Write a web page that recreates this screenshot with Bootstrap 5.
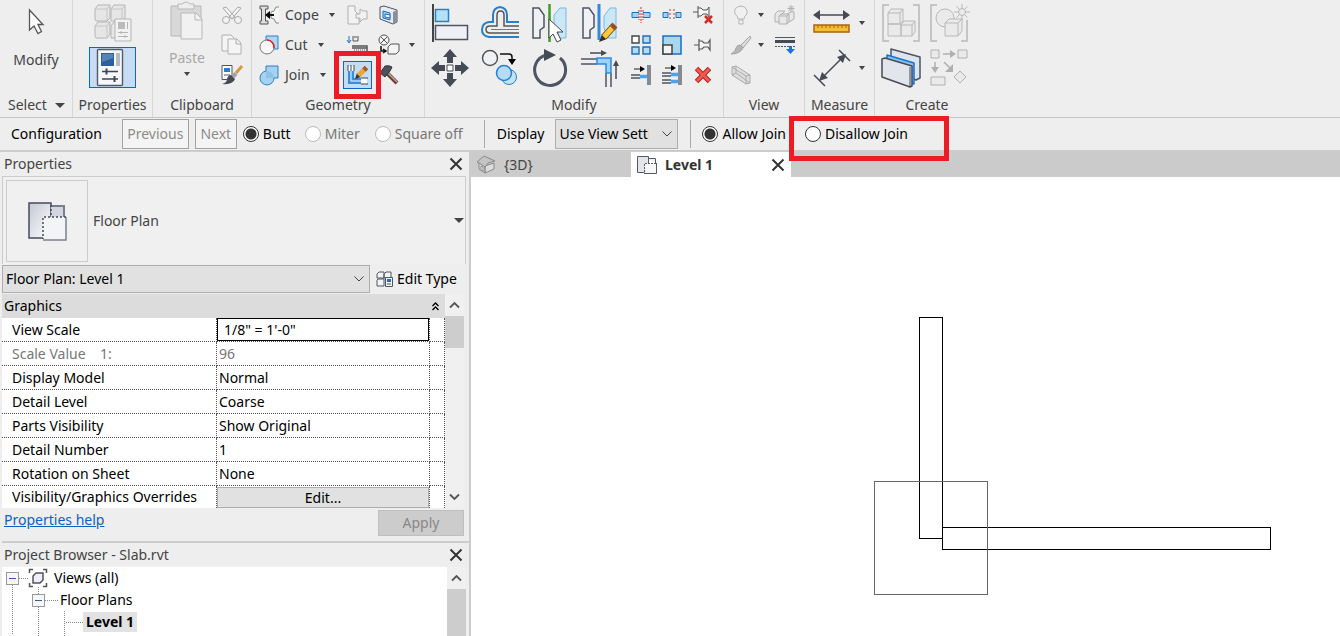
<!DOCTYPE html>
<html lang="en">
<head>
<meta charset="utf-8">
<meta name="viewport" content="width=device-width, initial-scale=1">
<title>Slab.rvt - Floor Plan: Level 1</title>
<link href="https://cdn.jsdelivr.net/npm/bootstrap@5.3.0/dist/css/bootstrap.min.css" rel="stylesheet">
<style>
  body { font-family: "Noto Sans", "Open Sans", sans-serif; font-size: 14px; line-height: 20px; color: #000; background: #eee; }
  button, select, input { font: inherit; color: inherit; }
  svg { display: block; flex: none; overflow: visible; }
  .bare { border: 0; padding: 0; background: none; display: flex; align-items: center; justify-content: center; }

  /* ribbon */
  .ribbon { border-bottom: 1px solid #c6c6c6; color: #444; }
  .pane { border-right: 1px solid #d6d6d6; display: flex; flex-direction: column; }
  .pane:last-child { border-right: 0; }
  .pane-body { height: 93px; }
  .pane-name { line-height: 24px; text-align: center; white-space: nowrap; }
  .w-select { width: 73px; } .w-props { width: 80px; } .w-clip { width: 99px; } .w-geo { width: 173px; }
  .w-modify { width: 299px; } .w-view { width: 81px; } .w-measure { width: 70px; } .w-create { width: 104px; }
  .tools { display: grid; align-items: center; align-content: start; }
  .rows2 { grid-auto-rows: 45px; }
  .rows3 { grid-auto-rows: 30px; }
  .big4 { grid-template-columns: repeat(4, 50px); }
  .small3 { grid-template-columns: repeat(3, 31px); }
  .pair { grid-template-columns: repeat(2, 48px); padding-left: 2px; }
  .geo-cols { grid-template-columns: 82px 32px 32px 12px; padding-left: 7px; }
  .word { margin-left: 6px; margin-right: 10px; }
  .active-tool { background: #c5dcf3; border: 1px solid #0f66c4; }
  .caret { width: 0; height: 0; border: 3px solid transparent; border-top: 4px solid #444; border-bottom: 0; display: inline-block; }
  .caret-lg { border-width: 5px 5px 0; }
  .off { color: #a8a8a8; }
  .callout { position: absolute; border: 5px solid #ed1c24; pointer-events: none; z-index: 3; }
  .callout-tool { inset: -10px -9px; }
  .callout-option { inset: -8px -41px -17px -16px; }

  /* options bar */
  .options { height: 34px; border-bottom: 2px solid #ccc; white-space: nowrap; }
  .cfg { margin: 0 20px 0 11px; }
  .step { border: 1px solid #a3a3a3; background: #f4f4f4; color: #8c8c8c; height: 30px; padding: 0; }
  .step-prev { width: 67px; margin-right: 6px; }
  .step-next { width: 42px; }
  .opt-butt { margin: 0 14px 0 6px; }
  .opt-miter { margin-right: 15px; }
  .opt-square { margin-right: 21px; }
  .opt-display { margin: 0 11px 0 12px; }
  .opt-allow { margin: 0 19px 0 11px; }
  .rad { appearance: none; width: 16px; height: 16px; margin: 0 4px 0 0; border: 1px solid #333; border-radius: 50%; background: #fff; flex: none; }
  .rad:checked { background: radial-gradient(circle, #333 5px, #fff 6px); }
  .rad:disabled { border-color: #bbb; }
  .gray { color: #777; }
  .rule { width: 1px; height: 28px; background: #aaa; }
  .rule-join { margin-left: 12px; }
  .combo { appearance: none; border: 1px solid #adadad; border-radius: 0; background: #e1e1e1 url("data:image/svg+xml,%3Csvg xmlns='http://www.w3.org/2000/svg' width='10' height='6'%3E%3Cpath d='M.5 .5L5 5L9.500 .5' fill='none' stroke='%23444'/%3E%3C/svg%3E") no-repeat right 5px center; }
  .combo-display { width: 123px; height: 30px; padding: 0 28px 0 3px; }

  /* side panels */
  .side { flex: 0 0 471px; border-right: 2px solid #ccc; padding-left: 2px; }
  .panel-title { height: 24px; padding: 0 6px 0 2px; color: #444; }
  .typebox { border: 1px solid #ccc; border-bottom: 0; height: 88px; margin-right: 3px; padding: 3px 1px 3px 3px; color: #444; background: #f0f0f0; }
  .thumb-box { width: 82px; height: 82px; border: 1px solid #ccc; margin-right: 5px; }
  .edit-row { height: 30px; }
  .type-btn { margin-left: 6px; }
  .combo-type { width: 368px; height: 28px; padding: 0 24px 0 3px; }
  .props { width: 443px; table-layout: fixed; border-collapse: separate; border-spacing: 0; background: #fff; }
  .props th, .props td { height: 24px; padding: 0 2px; line-height: 20px; font-weight: 400; border-bottom: 1px dotted #555; border-right: 1px dotted #555; white-space: nowrap; }
  .props tbody th { padding-left: 10px; }
  .props thead th { background: #dcdcdc; border: 0; }
  .props tbody tr:last-child td, .props tbody tr:last-child th { border-bottom: 0; height: 22px; }
  .props td.flush { padding: 0; }
  .c-name { width: 215px; }
  .c-value { width: 213px; }
  .gray-row th, .gray-row td { color: #777; }
  .scale { width: 100%; height: 23px; display: block; border: 1px solid #000; border-radius: 0; padding: 0 6px; }
  .edit { width: 100%; height: 21px; line-height: 18px; border: 1px solid #adadad; background: #e1e1e1; display: block; }
  .scroll { width: 19px; background: #f0f0f0; }
  .knob { background: #cdcdcd; }
  .knob-a { height: 32px; }
  .foot { height: 35px; padding: 2px 5px 0 2px; }
  .apply { width: 86px; height: 26px; border: 1px solid #bfbfbf; background: #ccc; color: #888; }
  .help { color: #0a62c4; }
  .split { border-bottom: 2px solid #ccc; }
  .tree { margin-right: 3px; }
  .leaf { height: 22px; white-space: nowrap; }
  .picked { background: #e2e2e2; padding: 0 3px; font-weight: 700; color: #000; }

  /* view tabs */
  .tabs { height: 25px; background: #cbcbcb; color: #444; }
  .doc { width: 160px; padding: 0 6px; }
  .doc-on { background: #fff; font-weight: 700; color: #333; }
</style>
</head>
<body class="d-flex flex-column vh-100 overflow-hidden">

<header class="ribbon d-flex">
  <section class="pane w-select">
    <button class="bare pane-body flex-column justify-content-start pt-2">
      <svg width="20" height="30" viewBox="0 0 20 30"><path d="M3.500 2v20l4.500-4 4 7.500 3.500-2-3.500-7h5z" fill="#fff" stroke="#555" stroke-width="1.300"/></svg>
      <span class="mt-2 pt-1">Modify</span>
    </button>
    <div class="pane-name d-flex align-items-center ps-2">Select<i class="caret caret-lg ms-2"></i></div>
  </section>

  <section class="pane w-props">
    <div class="pane-body tools rows2 justify-content-center">
      <button class="bare" aria-label="Type Properties">
        <svg width="38" height="38" viewBox="0 0 38 38" fill="#e6e6e6" stroke="#b5b5b5" stroke-linejoin="round"><path d="M1 5l3-4h12v13l-3 3H2q-1-1-1-3zM17 5l3-4h11v13l-2 3H17zM1 22l3-4h12v12l-3 4H2q-1-1-1-3z"/><path d="M17 22l3-4h5v16h-8z"/><path d="M2 5h11v11M18 5h10v11M2 22h11v11M13 5l3-4M28 5l3-4M13 22l3-4" fill="none" stroke="#c6c6c6"/><rect x="21" y="15" width="16" height="22" fill="#f2f2f2"/><rect x="24" y="18" width="7" height="7" fill="#bbb" stroke="none"/><path d="M33.500 18v7M24 28.500h10M24 32.500h10M27 27v3M31 31v3"/></svg>
      </button>
      <button class="bare active-tool" aria-label="Properties">
        <svg width="45" height="39" viewBox="0 0 45 39"><rect x="7.500" y="1.500" width="25" height="36" rx="1" fill="#f6f7f9" stroke="#555b66" stroke-width="1.400"/><path d="M11 5h13v13H11z" fill="#2d6098"/><path d="M12 6h11v4L12 14z" fill="#5585b5"/><path d="M26 5h4v13h-4z" fill="#b4b9c4"/><path d="M12 23.500h16M12 31h16" stroke="#3f4855" stroke-width="1.500"/><path d="M16.500 20.500v6M24.500 28v6" stroke="#3f4855" stroke-width="2"/></svg>
      </button>
    </div>
    <div class="pane-name">Properties</div>
  </section>

  <section class="pane w-clip">
    <div class="pane-body d-flex">
      <button class="bare off flex-column justify-content-start ms-3">
        <svg width="34" height="44" viewBox="0 0 34 44" stroke="#b8b8b8" fill="#d8d8d8"><path d="M1 6h30v30H1z"/><path d="M8 9V4h4q4-4 8 0h4v5z" fill="#eee"/><path d="M11 13h15l6 6v20H11z" fill="#f1f1f1"/><path d="M25 13v7h7" fill="none"/></svg>
        <span class="mt-1">Paste</span><i class="caret mt-1"></i>
      </button>
      <div class="tools rows3 ms-auto me-2">
        <button class="bare" aria-label="Cut to Clipboard"><svg width="22" height="22" viewBox="0 0 22 22" fill="#f2f2f2" stroke="#aaa"><path d="M2 4l3-1 9 10-3 2zM20 4l-3-1-9 10 3 2z"/><circle cx="5" cy="16" r="3.500"/><circle cx="17" cy="16" r="3.500"/></svg></button>
        <button class="bare" aria-label="Copy to Clipboard"><svg width="22" height="22" viewBox="0 0 22 22" fill="#f4f4f4" stroke="#b0b0b0"><path d="M1 1h9l3 3v13H1z"/><path d="M7 5h9l4 4v11H7zM15 5v5h5"/></svg></button>
        <button class="bare" aria-label="Match Type"><svg width="22" height="22" viewBox="0 0 22 22"><path d="M1 1.500h10v14H1z" fill="#fff" stroke="#4c5563"/><path d="M3 4h6v4H3z" fill="#2b7cd3"/><path d="M3 11h6" stroke="#4c5563"/><path d="M21 2l-6 7" stroke="#d99a35" stroke-width="3"/><path d="M13.500 8l3 3-3 3-3-3z" fill="#9aa3b3"/><path d="M10 11l4 4q-2 6-13 5 5-1 5-5 1-4 4-4z" fill="#454b55"/></svg></button>
      </div>
    </div>
    <div class="pane-name">Clipboard</div>
  </section>

  <section class="pane w-geo">
    <div class="pane-body tools rows3 geo-cols">
      <button class="bare justify-content-start"><svg width="20" height="20" viewBox="0 0 20 20"><path d="M1 1h8v3H6.500v12H9v3H1v-3h1.500V4H1z" fill="#ddd" stroke="#555"/><path d="M20 2h-3l-2 4-3 1v6l3 1 2 4h3" fill="#f4f4f4" stroke="#888"/><path d="M15 10H8" stroke="#111" stroke-width="2"/><path d="M11 6v8l-5-4z"/></svg><span class="word">Cope</span><i class="caret"></i></button>
      <button class="bare" aria-label="Remove Coping"><svg width="20" height="20" viewBox="0 0 20 20" fill="#f2f2f2" stroke="#b0b0b0"><path d="M1 1h7v5l4 4v9H1z"/><path d="M20 6v8h-4l-3 3v-4H9V9h4V4l3 2z"/></svg></button>
      <button class="bare" aria-label="Wall Opening"><svg width="20" height="20" viewBox="0 0 20 20"><path d="M1 2l4-1 13 4v12l-4 2L1 14z" fill="#e8ecf1" stroke="#4c5563"/><path d="M14 7l4-2v12l-4 2z" fill="#888f9b"/><path d="M4 6l7 2v7l-7-2z" fill="#9ccbf0" stroke="#1d6fc0"/><path d="M6 9l5 1v3l-5-1z" fill="#fff" stroke="#1d6fc0"/></svg></button><i></i>

      <button class="bare justify-content-start"><svg width="20" height="20" viewBox="0 0 20 20"><path d="M7 1h12v13H7z" fill="#acd8f3" stroke="#2a7fc9"/><circle cx="8" cy="12" r="7" fill="#f7f7f7" stroke="#777"/><path d="M8 5a7 7 0 0 1 7 8" fill="none" stroke="#e02020" stroke-width="1.500"/></svg><span class="word">Cut</span><i class="caret"></i></button>
      <button class="bare" aria-label="Split Face"><svg width="22" height="18" viewBox="0 0 22 18" fill="none"><path d="M3 0v6M1 4l2 3 2-3" stroke="#1976d2"/><path d="M7 0v5h5V0M8 1h3" stroke="#555"/><path d="M6 10h15v6H6M6 12h15" stroke="#555" stroke-width="1.500"/><path d="M8 14h12" stroke="#555" stroke-dasharray="1 1"/></svg></button>
      <button class="bare" aria-label="Unjoin"><svg width="22" height="20" viewBox="0 0 22 20" fill="#f4f4f4" stroke="#555"><circle cx="6" cy="5" r="5"/><path d="M3 2l6 6M9 2L3 8"/><path d="M10 12l3-3h8v7l-3 3h-8z"/><path d="M3 11v5h4M5 14l3 2-3 2" fill="none" stroke="#111" stroke-width="1.500"/></svg></button><i class="caret ms-1"></i>

      <button class="bare justify-content-start"><svg width="20" height="20" viewBox="0 0 20 20" fill="#a5d2f0" stroke="#2a7fc9"><path d="M7 1h12v12h-4a7 7 0 1 1-8-7z"/><path d="M7 6a7 7 0 0 1 8 7H7z" fill="#8ec3e8" stroke="none"/></svg><span class="word">Join</span><i class="caret"></i></button>
      <div class="position-relative mx-auto">
        <button class="bare active-tool" aria-label="Wall Joins"><svg width="27" height="26" viewBox="0 0 27 26" fill="none"><path d="M4 4v18h19v-6H10V4z" fill="#3a8ddb"/><path d="M7 9v10h10" stroke="#b9dcf7" stroke-width="1.500"/><path d="M4 4h6v5H4zM17 16h6v6h-6z" fill="#fff"/><path d="M4 3v6M10 3v6M7 3v6M17 16h7M17 22h7" stroke="#444"/><path d="M11 17l2-6 4 4z" fill="#333"/><path d="M14.500 13.500l6-6" stroke="#e9a63a" stroke-width="5"/><path d="M20 8l2.500-2.500" stroke="#a55a24" stroke-width="5"/></svg></button>
        <span class="callout callout-tool"></span>
      </div>
      <button class="bare" aria-label="Demolish"><svg width="20" height="20" viewBox="0 0 20 20"><path d="M8 8l10 10" stroke="#5d4038" stroke-width="4"/><path d="M9 8l9 9" stroke="#c9a294" stroke-width="1.500"/><path d="M1 8l5-7q4-1 7 1l-2 4-5 6z" fill="#4b525c" stroke="#333"/></svg></button><i></i>
    </div>
    <div class="pane-name">Geometry</div>
  </section>

  <section class="pane w-modify">
    <div class="pane-body d-flex">
      <div class="tools rows2 big4">
        <button class="bare" aria-label="Align"><svg width="38" height="38" viewBox="0 0 38 38"><path d="M2 0v38" stroke="#444" stroke-width="2"/><path d="M4.500 5.500h13v12h-13z" fill="#b9dff4" stroke="#2a7fc9" stroke-width="1.500"/><path d="M4.500 21.500h32v14h-32z" fill="#eef0f3" stroke="#4c5563" stroke-width="1.500"/></svg></button>
        <button class="bare" aria-label="Offset"><svg width="38" height="34" viewBox="0 0 38 34" fill="none"><path d="M38 31H8q-7-1-7-7 0-7 7-8h4V9q0-7 7-8 7 1 7 8v7h12" stroke="#2a7fc9" stroke-width="2"/><path d="M38 27H9q-4 0-4-3.500Q5 20 9 20h7V9q0-4 3.500-4T23 9v11h15" stroke="#555" stroke-width="1.500"/><path d="M38 23.500H10" stroke="#777"/></svg></button>
        <button class="bare" aria-label="Mirror - Pick Axis"><svg width="38" height="38" viewBox="0 0 38 38"><path d="M2 4h6l5 7v12l-4 3v8H2z" fill="#f0f1f4" stroke="#4c5563" stroke-width="1.500"/><path d="M35 4h-6l-6 7v12l4 3v8h8z" fill="#c9e7f6" stroke="#77b9e4"/><path d="M18.500 0v38" stroke="#3a9d23" stroke-width="2.500"/><path d="M18 15v19l4-4 4 8 4-2-4-8h6z" fill="#fff" stroke="#444"/></svg></button>
        <button class="bare" aria-label="Mirror - Draw Axis"><svg width="38" height="38" viewBox="0 0 38 38"><path d="M2 4h6l5 7v12l-4 3v8H2z" fill="#f0f1f4" stroke="#4c5563" stroke-width="1.500"/><path d="M35 4h-6l-6 8v12l4 10h8z" fill="#c9e7f6" stroke="#77b9e4"/><path d="M18 0v36" stroke="#2a8be8" stroke-width="3"/><path d="M18 38l3-8 5 5z" fill="#333"/><path d="M23 33l9-10" stroke="#8a4b12" stroke-width="7"/><path d="M23 33l9-10" stroke="#ffcb3c" stroke-width="5"/><path d="M31 24l3-3" stroke="#95502a" stroke-width="7"/></svg></button>
        <button class="bare" aria-label="Move"><svg width="38" height="38" viewBox="0 0 38 38" fill="#454b55"><path d="M19 0l7 8h-4v6h-6V8h-4zM19 38l7-8h-4v-6h-6v6h-4zM0 19l8-7v4h6v6H8v4zM38 19l-8-7v4h-6v6h6v4z"/><path d="M16 16h6v6h-6z" fill="#fff" stroke="#454b55"/></svg></button>
        <button class="bare" aria-label="Copy"><svg width="38" height="38" viewBox="0 0 38 38"><circle cx="9" cy="9" r="7.500" fill="#f0f1f4" stroke="#555" stroke-width="1.500"/><circle cx="28" cy="28" r="7.500" fill="#c3e3f6" stroke="#2a7fc9"/><circle cx="23" cy="24" r="7.500" fill="#b5dcf4" stroke="#2a7fc9" stroke-width="1.500"/><path d="M19 5h9q3 0 3 3v3" fill="none" stroke="#111" stroke-width="1.500"/><path d="M27 10h8l-4 6z"/></svg></button>
        <button class="bare" aria-label="Rotate"><svg width="38" height="38" viewBox="0 0 38 38"><path d="M15 6A15.500 15.500 0 1 0 29 9" fill="none" stroke="#4c5563" stroke-width="3"/><path d="M13 0l12 6-12 6z" fill="#454b55"/></svg></button>
        <button class="bare" aria-label="Trim/Extend to Corner"><svg width="38" height="38" viewBox="0 0 38 38"><path d="M0 10h16M0 15h16M25 24v14M30 24v14" stroke="#4c5563" stroke-width="1.500"/><path d="M16 9h14v15h-5v-9h-9z" fill="#9fd2fa" stroke="#2a8be8" stroke-width="1.500"/><path d="M9 4h12M35 30V16" stroke="#454b55" stroke-width="1.500"/><path d="M20 1l6 3-6 3zM32 17l3-6 3 6z" fill="#454b55"/></svg></button>
      </div>
      <div class="tools rows3 small3">
        <button class="bare" aria-label="Split Element"><svg width="20" height="16" viewBox="0 0 20 16"><path d="M1 5.500h18v5H1z" fill="#9fd2fa" stroke="#1f6fb8"/><path d="M8 2h4v12H8z" fill="#eee"/><path d="M10 0v16M8 3v10M12 3v10" stroke="#c33" stroke-dasharray="2 1"/></svg></button>
        <button class="bare" aria-label="Split with Gap"><svg width="20" height="16" viewBox="0 0 20 16"><path d="M1 5.500h5v5H1zM14 5.500h5v5h-5z" fill="#9fd2fa" stroke="#1f6fb8"/><path d="M8 2v12M12 2v12" stroke="#c33" stroke-dasharray="2 2"/></svg></button>
        <button class="bare" aria-label="Unpin"><svg width="20" height="20" viewBox="0 0 20 20"><path d="M0 7h5M5 1v12M5 3h3l2 2h4l2-3v10l-2-3h-4l-2 2H5" fill="#f4f4f4" stroke="#555"/><path d="M12 11l7 7M19 11l-7 7" stroke="#d32a22" stroke-width="2.500"/></svg></button>
        <button class="bare" aria-label="Array"><svg width="20" height="20" viewBox="0 0 20 20" fill="#b5dcf4" stroke="#1f6fb8" stroke-width="1.400"><path d="M1 1h7v7H1z" fill="#fff" stroke="#444"/><path d="M12 1h7v7h-7zM1 12h7v7H1zM12 12h7v7h-7z"/></svg></button>
        <button class="bare" aria-label="Scale"><svg width="20" height="20" viewBox="0 0 20 20"><path d="M1 1h18v18H1z" fill="#a8d8ef" stroke="#1f6fb8" stroke-width="1.500"/><path d="M1 10h9v9H1z" fill="#f4f4f4" stroke="#444" stroke-width="1.500"/></svg></button>
        <button class="bare" aria-label="Pin"><svg width="18" height="14" viewBox="0 0 18 14"><path d="M0 7h5M5 1v12M5 3h3l2 2h4l2-3v10l-2-3h-4l-2 2H5" fill="#f4f4f4" stroke="#555" stroke-width="1.200"/></svg></button>
        <button class="bare" aria-label="Trim/Extend Single"><svg width="20" height="20" viewBox="0 0 20 20"><path d="M17 0v20M19 0v20M0 10h9M0 13h9" stroke="#4c5563" stroke-width="1.300"/><path d="M9 11.500h7" stroke="#4ba3f0" stroke-width="3.500"/><path d="M3 4h8" stroke="#222"/><path d="M9 1l5 3-5 3z"/></svg></button>
        <button class="bare" aria-label="Trim/Extend Multiple"><svg width="20" height="20" viewBox="0 0 20 20"><path d="M17 0v20M19 0v20M0 8h9M0 11h9M0 15h9M0 18h9" stroke="#4c5563" stroke-width="1.300"/><path d="M9 9.500h7M9 16.500h7" stroke="#4ba3f0" stroke-width="3.500"/><path d="M3 3h8" stroke="#222"/><path d="M9 0l5 3-5 3z"/></svg></button>
        <button class="bare" aria-label="Delete"><svg width="18" height="18" viewBox="0 0 18 18"><path d="M2.500 2.500l13 13M15.500 2.500l-13 13" stroke="#b8201c" stroke-width="5"/><path d="M3 3l12 12M15 3L3 15" stroke="#ee5a50" stroke-width="3"/></svg></button>
      </div>
    </div>
    <div class="pane-name">Modify</div>
  </section>

  <section class="pane w-view">
    <div class="pane-body d-flex justify-content-between px-2">
      <div class="tools rows3">
        <button class="bare" aria-label="Hide in View"><svg width="18" height="20" viewBox="1 0 18 20" fill="#f0f0f0" stroke="#b5b5b5"><path d="M7 14q0-3-3-5-2-7 6-8 7 1 6 8-3 2-3 5zM8 15h4v4H8z"/></svg><i class="caret ms-2"></i></button>
        <button class="bare" aria-label="Override Graphics"><svg width="18" height="20" viewBox="1 0 18 20" fill="#b5b5b5" stroke="#a5a5a5"><path d="M19 1l-9 9 2 3 8-10z" fill="#ddd"/><path d="M9 10l3 3q-3 6-12 6 5-3 5-6 1-3 4-3z"/></svg><i class="caret ms-2"></i></button>
        <button class="bare justify-content-start" aria-label="Selection Box"><svg width="20" height="20" viewBox="1 0 20 20" fill="#ddd" stroke="#aaa"><path d="M1 2l4-1 14 9v8l-4 1L1 10zM1 2l14 9v8M15 11l4-1M5 1v7l14 10M5 8l-4 2"/></svg></button>
      </div>
      <div class="tools rows3">
        <button class="bare" aria-label="Displace Elements"><svg width="22" height="20" viewBox="0 0 22 20" fill="#e8e8e8" stroke="#b0b0b0"><path d="M1 9l3-3h7l-3 3v8H1zM13 9l4-2h3v7l-5 3z"/><path d="M5 11l2-2h8v8l-2 2H5zM5 11h8v8M13 11l2-2"/><path d="M17 0v7M13.500 3.500h7M14.500 1l5 5M19.500 1l-5 5"/></svg></button>
        <button class="bare" aria-label="Linework"><svg width="22" height="20" viewBox="0 0 22 20"><path d="M1 2.500h20" stroke="#555"/><path d="M1 6.500h20" stroke="#454b55" stroke-width="3"/><path d="M1 11.500h20" stroke="#555" stroke-dasharray="2 1"/><path d="M15 11h3v3h3l-4.500 5-4.500-5h3z" fill="#1673e0"/></svg></button>
      </div>
    </div>
    <div class="pane-name">View</div>
  </section>

  <section class="pane w-measure">
    <div class="pane-body tools rows2 ps-2">
      <button class="bare justify-content-start" aria-label="Measure"><svg width="38" height="26" viewBox="0 0 38 26"><path d="M4 5h28" stroke="#454b55" stroke-width="1.500"/><path d="M0 5l7-5v10zM37 5l-7-5v10z" fill="#454b55"/><path d="M1 15h35v7H1z" fill="#f5bf35" stroke="#a6650f" stroke-width="1.500"/><path d="M5 15v3M9 15v3M13 15v3M17 15v3M21 15v3M25 15v3M29 15v3M33 15v3" stroke="#a6650f"/></svg><i class="caret ms-2"></i></button>
      <button class="bare justify-content-start" aria-label="Aligned Dimension"><svg width="38" height="38" viewBox="0 0 38 38"><path d="M8 30L31 7M1 26l11 11M26 1l11 11" stroke="#454b55" stroke-width="1.500"/><path d="M6 32l3-9 6 6zM33 5l-9 3 6 6z" fill="#454b55"/></svg><i class="caret ms-2"></i></button>
    </div>
    <div class="pane-name">Measure</div>
  </section>

  <section class="pane w-create">
    <div class="pane-body tools rows2 pair">
      <button class="bare" aria-label="Create Group"><svg width="38" height="38" viewBox="0 0 38 38" fill="#eaeaea" stroke="#b8b8b8"><path d="M7 1H1v36h6M31 1h6v36h-6" fill="none" stroke-width="1.500"/><path d="M6 9l3-4h12v12l-3 3H6zM6 20h13v12H6zM19 21l3-4h11v11l-3 4H19z"/><path d="M6 9h12v11M18 9l3-4M19 21h11v11M30 21l3-4" fill="none"/></svg></button>
      <button class="bare" aria-label="Create Similar"><svg width="38" height="38" viewBox="0 0 38 38" fill="#eaeaea" stroke="#b8b8b8"><path d="M7 1H1v36h6M37 16v21h-6" fill="none" stroke-width="1.500"/><circle cx="15" cy="14" r="9"/><path d="M15 19l4-4h13v12l-4 5H15z"/><path d="M15 19h13v13M28 19l4-4" fill="none"/><path d="M32 0v16M24 8h16M26.500 2.500l11 11M37.500 2.500l-11 11"/><circle cx="32" cy="8" r="3.500"/></svg></button>
      <button class="bare" aria-label="Create Assembly"><svg width="40" height="40" viewBox="0 0 40 40" stroke-linejoin="round"><path d="M10 1l29 8v21l-4 2-25-11z" fill="#dfe3ea" stroke="#4c5563" stroke-width="1.500"/><path d="M6 7l27 8v21L6 27z" fill="#86c3ee" stroke="#1673d0" stroke-width="1.500"/><path d="M1 11l3-1 27 8v20l-2 1L1 29z" fill="#e2e5eb" stroke="#454b55" stroke-width="1.500"/><path d="M29 19v20" stroke="#454b55"/></svg></button>
      <button class="bare" aria-label="Create Parts"><svg width="38" height="38" viewBox="0 0 38 38" fill="#eaeaea" stroke="#b0b0b0"><path d="M1 1h8v8H1zM28 1h9v8h-9zM1 28h14v8H1zM30 22l6 6-6 6-6-6z"/><path d="M13 5h9M5 13v9M14 13l6 6" stroke-width="1.500"/><path d="M20 1l6 4-6 4zM1 18h8l-4 6zM23 15v8h-8z" fill="#b0b0b0" stroke="none"/></svg></button>
    </div>
    <div class="pane-name">Create</div>
  </section>
</header>

<form class="options d-flex align-items-center">
  <span class="cfg">Configuration</span>
  <button type="button" class="step step-prev" disabled>Previous</button>
  <button type="button" class="step step-next" disabled>Next</button>
  <label class="d-flex align-items-center opt-butt"><input class="rad" type="radio" name="cfg" checked>Butt</label>
  <label class="d-flex align-items-center gray opt-miter"><input class="rad" type="radio" name="cfg" disabled>Miter</label>
  <label class="d-flex align-items-center gray opt-square"><input class="rad" type="radio" name="cfg" disabled>Square off</label>
  <span class="rule"></span>
  <label for="display" class="opt-display">Display</label>
  <select id="display" class="combo combo-display"><option>Use View Settings</option></select>
  <span class="rule rule-join"></span>
  <label class="d-flex align-items-center opt-allow"><input class="rad" type="radio" name="join" checked>Allow Join</label>
  <label class="d-flex align-items-center position-relative"><input class="rad" type="radio" name="join">Disallow Join<span class="callout callout-option"></span></label>
</form>

<main class="d-flex flex-grow-1 overflow-hidden">
  <aside class="side d-flex flex-column">
    <div class="panel-title d-flex align-items-center justify-content-between">Properties
      <button class="bare" aria-label="Close Properties"><svg width="14" height="14" viewBox="0 0 14 14"><path d="M1.500 1.500l11 11M12.500 1.500l-11 11" stroke="#333" stroke-width="2"/></svg></button>
    </div>
    <div class="typebox d-flex align-items-center">
      <span class="thumb-box d-flex align-items-center justify-content-center"><svg width="40" height="40" viewBox="0 0 40 40"><defs><linearGradient id="sheet" x2="1" y2="1"><stop stop-color="#c3c8d3"/><stop offset="1" stop-color="#fff"/></linearGradient></defs><path d="M2 2h22v35H2z" fill="url(#sheet)" stroke="#454b5b" stroke-width="1.500"/><path d="M24 5h13v11H24z" fill="#d3d6de"/><path d="M24 5h13v11" fill="none" stroke="#777e8c" stroke-width="2"/><path d="M16 16h23v23H16z" fill="#f3f4f5"/><path d="M39 16v23H16" fill="none" stroke="#7b818c" stroke-width="1.500"/><path d="M39 16H16v22M24 4v12" fill="none" stroke="#454b5b" stroke-width="1.500" stroke-dasharray="2 2"/></svg></span>
      <span>Floor Plan</span><i class="caret caret-lg ms-auto"></i>
    </div>
    <div class="d-flex align-items-center edit-row">
      <select class="combo combo-type" aria-label="Type"><option>Floor Plan: Level 1</option></select>
      <button class="bare type-btn"><svg width="17" height="16" viewBox="0 0 17 16" fill="#f4f4f4" stroke="#4c5563"><path d="M1 3l2-2h5v6H1zM8 3l2-2h5v6H8zM1 9l1-1h6v7H1z"/><path d="M9.500 6.500h7v9h-7z"/><path d="M11 8h4v3h-4z" fill="#2b6cb0" stroke="none"/><path d="M11 13h4"/></svg><span class="ms-1">Edit Type</span></button>
    </div>
    <div class="d-flex">
      <table class="props">
        <colgroup><col class="c-name"><col class="c-value"><col></colgroup>
        <thead><tr><th colspan="3"><div class="d-flex align-items-center justify-content-between">Graphics<svg class="me-1" width="7" height="9" viewBox="0 0 7 9" fill="none" stroke="#000" stroke-width="1.400"><path d="M.5 4l3-3 3 3M.5 8l3-3 3 3"/></svg></div></th></tr></thead>
        <tbody>
          <tr><th><label for="scale">View Scale</label></th><td class="flush"><input id="scale" class="scale" value="1/8&quot; = 1'-0&quot;"></td><td></td></tr>
          <tr class="gray-row"><th>Scale Value &nbsp;&nbsp; 1:</th><td>96</td><td></td></tr>
          <tr><th>Display Model</th><td>Normal</td><td></td></tr>
          <tr><th>Detail Level</th><td>Coarse</td><td></td></tr>
          <tr><th>Parts Visibility</th><td>Show Original</td><td></td></tr>
          <tr><th>Detail Number</th><td>1</td><td></td></tr>
          <tr><th>Rotation on Sheet</th><td>None</td><td></td></tr>
          <tr><th>Visibility/Graphics Overrides</th><td class="flush"><button class="edit">Edit...</button></td><td></td></tr>
        </tbody>
      </table>
      <div class="scroll d-flex flex-column align-items-center">
        <svg class="my-2" width="11" height="6" viewBox="0 0 11 6"><path d="M1 5.500l4.500-4.500 4.500 4.500" fill="none" stroke="#555" stroke-width="1.800"/></svg>
        <span class="knob knob-a w-100"></span>
        <svg class="mb-2 mt-auto" width="11" height="6" viewBox="0 0 11 6"><path d="M1 .5l4.500 4.500L10 .5" fill="none" stroke="#555" stroke-width="1.800"/></svg>
      </div>
    </div>
    <div class="split foot d-flex align-items-start justify-content-between">
      <a href="#" class="help">Properties help</a>
      <button class="apply" disabled>Apply</button>
    </div>
    <div class="panel-title d-flex align-items-center justify-content-between">Project Browser - Slab.rvt
      <button class="bare" aria-label="Close Project Browser"><svg width="14" height="14" viewBox="0 0 14 14"><path d="M1.500 1.500l11 11M12.500 1.500l-11 11" stroke="#333" stroke-width="2"/></svg></button>
    </div>
    <div class="d-flex flex-grow-1 overflow-hidden bg-white tree">
      <div class="flex-grow-1">
        <div class="leaf d-flex align-items-center">
          <svg width="48" height="22" viewBox="0 0 48 22" fill="none"><path d="M17 11.500h9M10.500 18v50" stroke="#888" stroke-dasharray="1 1"/><rect x="4.500" y="5.500" width="12" height="12" fill="#f6f6f6" stroke="#999"/><path d="M7 11.500h7" stroke="#3558a0"/><path d="M27.500 6V2.500H31M41 2.500h3.500V6M44.500 16v3.500H41M31 19.500h-3.500V16" stroke="#555" stroke-width="1.500"/><path d="M31 9l3-3h7v7l-3 3h-7z" fill="#eef" stroke="#555" stroke-width="1.500"/></svg>
          <span class="ms-1">Views (all)</span>
        </div>
        <div class="leaf d-flex align-items-center">
          <svg width="58" height="22" viewBox="0 0 58 22" fill="none"><path d="M43 11.500h13M36.500-2v7M36.500 18v30" stroke="#888" stroke-dasharray="1 1"/><rect x="30.500" y="5.500" width="12" height="12" fill="#f6f6f6" stroke="#999"/><path d="M33 11.500h7" stroke="#3558a0"/></svg>
          <span>Floor Plans</span>
        </div>
        <div class="leaf d-flex align-items-center">
          <svg width="81" height="22" viewBox="0 0 81 22" fill="none"><path d="M64 11.500h17M62.500 0v30" stroke="#888" stroke-dasharray="1 1"/></svg>
          <span class="picked">Level 1</span>
        </div>
      </div>
      <div class="scroll d-flex flex-column align-items-center">
        <svg class="my-2" width="11" height="6" viewBox="0 0 11 6"><path d="M1 5.500l4.500-4.500 4.500 4.500" fill="none" stroke="#555" stroke-width="1.800"/></svg>
        <span class="knob w-100 flex-grow-1"></span>
      </div>
    </div>
  </aside>

  <section class="flex-grow-1 d-flex flex-column overflow-hidden">
    <div class="tabs d-flex">
      <div class="doc d-flex align-items-center">
        <svg width="19" height="19" viewBox="0 0 19 19" fill="#ddd" stroke="#8a8a8a"><path d="M2 8v6l6 4V11zM8 11l9-3v6l-9 4z"/><path d="M0 7l7-6 11 5-7 2-3 4-6-4z" fill="#c4c4c4"/><path d="M4 11l2 1v4l-2-1z" fill="#fff"/></svg>
        <a href="#" class="text-reset text-decoration-none ms-2">{3D}</a>
      </div>
      <div class="doc doc-on d-flex align-items-center">
        <svg width="20" height="18" viewBox="0 0 20 18"><path d="M.5.500h11v16H.5z" fill="#e2e5ea" stroke="#555b66"/><path d="M11 2.500h7.500V8" fill="#eef0f3" stroke="#555b66"/><path d="M7.500 7.500h12v10h-12z" fill="#f7f7f8"/><path d="M19.500 7v10.500H7" fill="none" stroke="#555b66"/><path d="M19 7.500H7.500V17M11.500 2v6" fill="none" stroke="#555b66" stroke-dasharray="2 1"/></svg>
        <a href="#" class="text-reset text-decoration-none ms-2">Level 1</a>
        <button class="bare ms-auto" aria-label="Close view"><svg width="14" height="14" viewBox="0 0 14 14"><path d="M1.500 1.500l11 11M12.500 1.500l-11 11" stroke="#333" stroke-width="2"/></svg></button>
      </div>
    </div>
    <div class="flex-grow-1 bg-white overflow-hidden">
      <svg width="869" height="459" viewBox="0 0 869 459" fill="none">
        <rect x="448.500" y="140.500" width="23" height="221" stroke="#000"/>
        <rect x="471.500" y="350.500" width="328" height="22" stroke="#000"/>
        <rect x="403.500" y="304.500" width="113" height="113" stroke="#666"/>
      </svg>
    </div>
  </section>
</main>

<script src="https://cdn.jsdelivr.net/npm/bootstrap@5.3.0/dist/js/bootstrap.bundle.min.js"></script>
</body>
</html>
